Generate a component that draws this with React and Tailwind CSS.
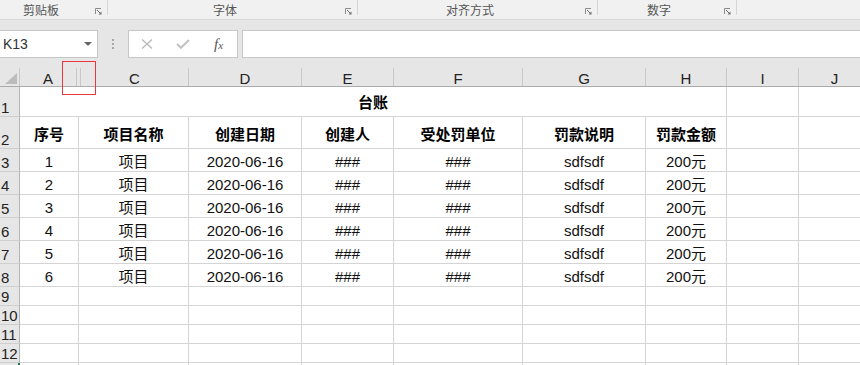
import React from "react";

const FONT = { fontFamily: '"Liberation Sans", "Noto Sans CJK SC", sans-serif' };
const CJK = { fontFamily: '"Noto Sans CJK SC", "Liberation Sans", sans-serif' };

const headerCols = [
  { l: "A", w: "w-[57px]" },
  { l: "", w: "w-[4px]" },
  { l: "C", w: "w-[108px]" },
  { l: "D", w: "w-[113px]" },
  { l: "E", w: "w-[92px]" },
  { l: "F", w: "w-[129px]" },
  { l: "G", w: "w-[123px]" },
  { l: "H", w: "w-[81px]" },
  { l: "I", w: "w-[72px]" },
  { l: "J", w: "w-[72px]" },
];

const bodyW = [
  "w-[59px]",
  "w-[110px]",
  "w-[113px]",
  "w-[92px]",
  "w-[129px]",
  "w-[123px]",
  "w-[81px]",
  "w-[72px]",
  "w-[72px]",
];

const titles = ["序号", "项目名称", "创建日期", "创建人", "受处罚单位", "罚款说明", "罚款金额", "", ""];

const dataRows = [1, 2, 3, 4, 5, 6].map((n) => [
  String(n),
  "项目",
  "2020-06-16",
  "###",
  "###",
  "sdfsdf",
  "200元",
  "",
  "",
]);

function Launcher() {
  return (
    <svg width="7" height="7" viewBox="0 0 7 7" className="shrink-0">
      <path d="M0.5 6V0.5H6" fill="none" stroke="#8a8a8a" strokeWidth="1" />
      <path d="M2 2L5.2 5.2" stroke="#6a6a6a" strokeWidth="1" />
      <path d="M6.5 3.5V6.5H3.5Z" fill="#6a6a6a" />
    </svg>
  );
}

function Group({ label, w, pl }) {
  return (
    <div className={`${w} h-full flex items-start shrink-0`}>
      <div className={`flex-1 h-full flex items-center ${pl}`}>
        <span className="text-[12px] leading-none text-[#555]" style={CJK}>
          {label}
        </span>
      </div>
      <div className="h-full flex items-start pt-[8px] pr-[5px]">
        <Launcher />
      </div>
      <div className="w-px h-[15px] bg-[#d6d6d6]" />
    </div>
  );
}

function RowHeader({ n, h, green }) {
  return (
    <div
      className={`w-[20px] shrink-0 ${h} bg-[#e6e6e6] border-b border-b-[#cfcfcf] border-r ${
        green ? "border-r-[#217346] border-r-2 bg-[#d3d3d3]" : "border-r-[#b4b4b4]"
      } flex items-end pl-[1px] pb-[1px]`}
    >
      <span className="text-[15px] leading-[14px] text-[#222]" style={FONT}>
        {n}
      </span>
    </div>
  );
}

function Cell({ w, h, children, bold }) {
  return (
    <div
      className={`${w} ${h} shrink-0 border-r border-b border-[#d4d4d4] flex items-center justify-center pt-[2px]`}
    >
      <span
        className={`text-[15px] leading-none whitespace-nowrap ${bold ? "font-bold text-black" : "text-[#111]"}`}
        style={bold ? CJK : FONT}
      >
        {children}
      </span>
    </div>
  );
}

export default function App() {
  return (
    <div className="w-[860px] h-[365px] overflow-hidden bg-white relative" style={FONT}>
      {/* Ribbon group labels */}
      <div className="h-[20px] bg-[#f1f1f1] border-b border-[#d8d8d8] flex">
        <Group label="剪贴板" w="w-[108px]" pl="pl-[23px]" />
        <Group label="字体" w="w-[250px]" pl="pl-[105px]" />
        <Group label="对齐方式" w="w-[240px]" pl="pl-[88px]" />
        <Group label="数字" w="w-[139px]" pl="pl-[49px]" />
      </div>

      {/* Formula bar */}
      <div className="bg-[#e6e6e6] pt-[10px] flex items-stretch h-[38px]">
        <div className="w-[98px] h-[28px] bg-white border border-l-0 border-[#c6c6c6] flex items-center justify-between pl-[3px] pr-[5px] shrink-0">
          <span className="text-[14px] leading-none text-[#333]" style={FONT}>
            K13
          </span>
          <svg width="8" height="4" viewBox="0 0 8 4">
            <path d="M0 0H8L4 4Z" fill="#666" />
          </svg>
        </div>
        <div className="w-[30px] h-[28px] flex items-center justify-center shrink-0">
          <div className="flex flex-col gap-[2px]">
            <div className="w-[2px] h-[2px] bg-[#a8a8a8]" />
            <div className="w-[2px] h-[2px] bg-[#a8a8a8]" />
            <div className="w-[2px] h-[2px] bg-[#a8a8a8]" />
          </div>
        </div>
        <div className="w-[110px] h-[28px] bg-white border border-[#c6c6c6] flex items-center shrink-0 relative">
          <svg width="12" height="10" viewBox="0 0 12 10" className="ml-[12px]">
            <path d="M1 0.5L11 9.5M11 0.5L1 9.5" stroke="#b8b8b8" strokeWidth="1.3" />
          </svg>
          <svg width="14" height="10" viewBox="0 0 14 10" className="ml-[23px]">
            <path d="M1 5L5 8.8L13 1" fill="none" stroke="#c2c2c2" strokeWidth="2" />
          </svg>
          <span
            className="ml-[24px] text-[#555] italic leading-none flex items-baseline"
            style={{ fontFamily: '"Liberation Serif", serif' }}
          >
            <span className="text-[15px]">f</span>
            <span className="text-[11px]">x</span>
          </span>
        </div>
        <div className="ml-[4px] w-[640px] h-[28px] bg-white border border-[#c6c6c6] shrink-0" />
      </div>

      {/* Column headers */}
      <div className="h-[29px] bg-[#e6e6e6] border-b border-[#ababab] flex items-end">
        <div className="w-[20px] h-[18px] shrink-0 border-r border-[#c8c8c8] flex items-end justify-end pr-[2px] pb-[2px]">
          <svg width="12" height="11" viewBox="0 0 12 11">
            <path d="M12 0V11H0Z" fill="#bcbcbc" />
          </svg>
        </div>
        {headerCols.map((c, i) => (
          <div
            key={i}
            className={`${c.w} h-[18px] shrink-0 border-r border-[#c8c8c8] flex items-center justify-center pt-[3px]`}
          >
            <span className="text-[15px] leading-none text-[#222]" style={FONT}>
              {c.l}
            </span>
          </div>
        ))}
      </div>

      {/* Row 1: merged title */}
      <div className="flex">
        <RowHeader n="1" h="h-[30px]" />
        <div className="w-[707px] h-[30px] shrink-0 border-r border-b border-[#d4d4d4] flex items-center justify-center">
          <span className="text-[15px] leading-none font-bold text-black" style={CJK}>
            台账
          </span>
        </div>
        <Cell w={bodyW[7]} h="h-[30px]" />
        <Cell w={bodyW[8]} h="h-[30px]" />
      </div>

      {/* Row 2: titles */}
      <div className="flex">
        <RowHeader n="2" h="h-[32px]" />
        {titles.map((t, i) => (
          <Cell key={i} w={bodyW[i]} h="h-[32px]" bold>
            {t}
          </Cell>
        ))}
      </div>

      {/* Data rows */}
      {dataRows.map((r, ri) => (
        <div className="flex" key={ri}>
          <RowHeader n={String(ri + 3)} h="h-[23px]" />
          {r.map((v, i) => (
            <Cell key={i} w={bodyW[i]} h="h-[23px]">
              {v}
            </Cell>
          ))}
        </div>
      ))}

      {/* Empty rows */}
      {[9, 10, 11, 12].map((n) => (
        <div className="flex" key={n}>
          <RowHeader n={String(n)} h="h-[19px]" />
          {bodyW.map((w, i) => (
            <Cell key={i} w={w} h="h-[19px]" />
          ))}
        </div>
      ))}
      <div className="flex">
        <RowHeader n="" h="h-[19px]" green />
        {bodyW.map((w, i) => (
          <Cell key={i} w={w} h="h-[19px]" />
        ))}
      </div>

      {/* Red highlight box over hidden column B */}
      <div className="absolute left-[62px] top-[61px] w-[34px] h-[34px] border border-[#e8383d] pointer-events-none" />
    </div>
  );
}
